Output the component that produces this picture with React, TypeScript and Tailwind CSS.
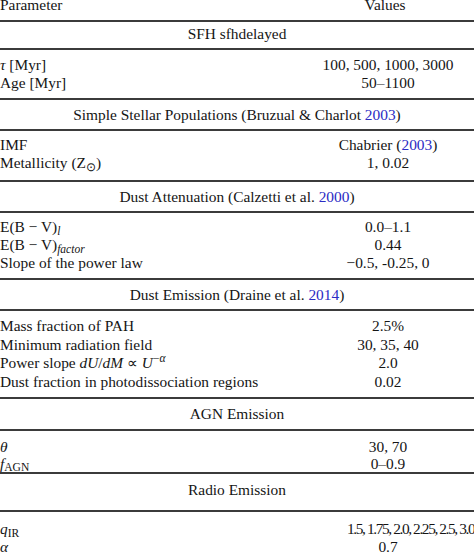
import React from 'react';

const Rule = () => <div className="h-[2px] bg-[#3b3b3b] shrink-0" />;

const Link = ({ children }: { children: React.ReactNode }) => (
  <span className="text-[#2b2bc4]">{children}</span>
);

function Section({ title, className }: { title: React.ReactNode; className: string }) {
  return (
    <div className={`flex items-center justify-center shrink-0 ${className}`}>
      <span className="whitespace-nowrap">{title}</span>
    </div>
  );
}

function Row({
  label,
  value,
  h = 'h-[18px]',
  valueClass = 'text-center',
}: {
  label: React.ReactNode;
  value: React.ReactNode;
  h?: string;
  valueClass?: string;
}) {
  return (
    <div className={`flex items-center ${h}`}>
      <div className="flex-1 whitespace-nowrap">{label}</div>
      <div className={`w-[172px] shrink-0 whitespace-nowrap ${valueClass}`}>{value}</div>
    </div>
  );
}

export default function App() {
  return (
    <div
      className="w-[474px] h-[555px] overflow-hidden bg-white text-[#151515] text-[15.4px] leading-[18px] flex flex-col"
      style={{ fontFamily: '"Liberation Serif", "Times New Roman", serif' }}
    >
      {/* header */}
      <div className="h-[20px] flex items-end pb-[6px] shrink-0">
        <div className="flex-1">Parameter</div>
        <div className="w-[172px] text-center pr-[6px]">Values</div>
      </div>
      <Rule />

      <Section title="SFH sfhdelayed" className="h-[26px] pb-[2px]" />
      <Rule />
      <div className="h-[48px] pt-[6px] shrink-0">
        <Row label={<><i>τ</i> [Myr]</>} value="100, 500, 1000, 3000" />
        <Row label="Age [Myr]" value="50–1100" />
      </div>
      <Rule />

      <Section
        title={<>Simple Stellar Populations (Bruzual &amp; Charlot <Link>2003</Link>)</>}
        className="h-[29px]"
      />
      <Rule />
      <div className="h-[49px] pt-[5px] shrink-0">
        <Row label="IMF" value={<>Chabrier (<Link>2003</Link>)</>} />
        <Row label={<>Metallicity (Z<sub>⊙</sub>)</>} value="1, 0.02" />
      </div>
      <Rule />

      <Section title={<>Dust Attenuation (Calzetti et al. <Link>2000</Link>)</>} className="h-[29px]" />
      <Rule />
      <div className="h-[65px] pt-[5px] shrink-0">
        <Row label={<>E(B − V)<sub><i>l</i></sub></>} value="0.0–1.1" />
        <Row label={<>E(B − V)<sub><i>factor</i></sub></>} value="0.44" />
        <Row label="Slope of the power law" value="−0.5, -0.25, 0" />
      </div>
      <Rule />

      <Section title={<>Dust Emission (Draine et al. <Link>2014</Link>)</>} className="h-[29px]" />
      <Rule />
      <div className="h-[86px] pt-[6px] shrink-0">
        <Row h="h-[18.5px]" label="Mass fraction of PAH" value="2.5%" />
        <Row h="h-[18.5px]" label="Minimum radiation field" value="30, 35, 40" />
        <Row
          h="h-[18.5px]"
          label={
            <>
              Power slope <i>dU</i>/<i>dM</i> ∝ <i>U</i>
              <sup>−<i>α</i></sup>
            </>
          }
          value="2.0"
        />
        <Row h="h-[18.5px]" label="Dust fraction in photodissociation regions" value="0.02" />
      </div>
      <Rule />

      <Section title="AGN Emission" className="h-[30px]" />
      <Rule />
      <div className="h-[41px] pt-[7px] shrink-0">
        <Row h="h-[17px]" label={<i>θ</i>} value="30, 70" />
        <Row
          h="h-[17px]"
          label={
            <>
              <i>f</i>
              <sub>AGN</sub>
            </>
          }
          value="0–0.9"
        />
      </div>
      <Rule />

      <Section title="Radio Emission" className="h-[36px] pb-[4px]" />
      <Rule />
      <div className="pt-[8px] shrink-0">
        <Row
          label={
            <>
              <i>q</i>
              <sub>IR</sub>
            </>
          }
          value="1.5, 1.75, 2.0, 2.25, 2.5, 3.0"
          valueClass="text-left pl-[45px] tracking-[-1.4px]"
        />
        <Row label={<i>α</i>} value="0.7" />
      </div>
    </div>
  );
}
